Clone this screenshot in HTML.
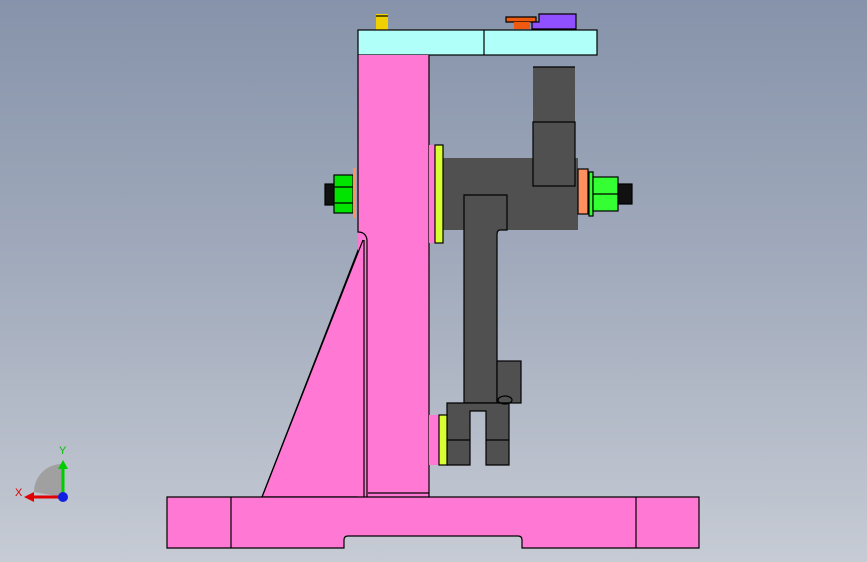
<!DOCTYPE html>
<html><head><style>
html,body{margin:0;padding:0;width:867px;height:562px;overflow:hidden}
body{background:linear-gradient(#8693aa,#a3acbd 50%,#c6cbd4)}
svg{position:absolute;left:0;top:0}
</style></head><body>
<svg width="867" height="562" viewBox="0 0 867 562" stroke="#000" stroke-width="1.2">
<rect x="376" y="14" width="12" height="16" fill="#f0d000" stroke="none"/>
<line x1="376" y1="16" x2="388" y2="16"/>
<path d="M506 17 H536 V22 H506 Z" fill="#f05a10"/>
<rect x="514" y="22" width="16" height="7" fill="#f05a10" stroke="none"/>
<path d="M539 14 H576 V29 H532 V22 H539 Z" fill="#9050ff"/>
<rect x="358" y="30" width="239" height="25" fill="#b0fff8"/>
<line x1="484" y1="30" x2="484" y2="55"/>
<path d="M262 497 L362 240 L368 238 L368 497 Z" fill="#ff78d4"/>
<rect x="358" y="55" width="71" height="442" fill="#ff78d4" stroke="none"/>
<path d="M358 55 V232 Q366 232 367 240 V497 M429 55 V497 M364 240 V497 M368 493 H429 M262 497 L363 240" fill="none"/>
<rect x="429" y="145" width="6" height="98" fill="#ff78d4" stroke="none"/>
<rect x="429" y="415" width="10" height="50" fill="#ff78d4" stroke="none"/>
<path d="M167 497 H699 V548 H522 V540 Q522 536 518 536 H348 Q344 536 344 540 V548 H167 Z" fill="#ff78d4"/>
<line x1="231" y1="497" x2="231" y2="548"/><line x1="636" y1="497" x2="636" y2="548"/>
<g fill="#505050">
<rect x="533" y="67" width="42" height="56" stroke="none"/>
<line x1="533" y1="67" x2="575" y2="67"/>
<rect x="443" y="158" width="135" height="72" stroke="none"/>
<rect x="533" y="122" width="42" height="64"/>
<path d="M464 195 H507 V230 H500 Q497 230 497 235 V403 H464 Z" />
<rect x="497" y="361" width="24" height="42"/>
<path d="M447 403 H509 V465 H486 V411 H470 V465 H447 Z"/>
<line x1="447" y1="440" x2="470" y2="440"/><line x1="486" y1="440" x2="509" y2="440"/>
<ellipse cx="505" cy="400" rx="7" ry="4" fill="none"/>
</g>
<rect x="435" y="145" width="8" height="98" fill="#d8ff30"/>
<rect x="439" y="415" width="8" height="50" fill="#d8ff30"/>
<rect x="325" y="184" width="9" height="21" fill="#111"/>
<rect x="334" y="175" width="19" height="38" fill="#00e400"/>
<line x1="334" y1="187" x2="353" y2="187"/><line x1="334" y1="203" x2="353" y2="203"/>
<rect x="353" y="168" width="3" height="50" fill="#ff9060" stroke="none"/>
<rect x="578" y="169" width="10" height="45" fill="#ff9060"/>
<rect x="589" y="172" width="4" height="44" fill="#33ff33"/>
<rect x="593" y="177" width="25" height="34" fill="#33ff33"/>
<line x1="593" y1="194" x2="618" y2="194"/>
<rect x="618" y="184" width="14" height="20" fill="#111"/>
<path d="M34 492 A28 28 0 0 1 62 464 V497 Z" fill="#a0a0a0" stroke="none"/>
<line x1="63" y1="497" x2="63" y2="468" stroke="#00cc00" stroke-width="3"/>
<path d="M58 469 L63 460 L68 469 Z" fill="#00cc00" stroke="none"/>
<line x1="63" y1="497" x2="32" y2="497" stroke="#e00000" stroke-width="3"/>
<path d="M34 492 L24 497 L34 502 Z" fill="#e00000" stroke="none"/>
<circle cx="63" cy="497" r="5" fill="#1020e0" stroke="none"/>
<text x="59" y="454" font-family="Liberation Sans,sans-serif" font-size="11" fill="#00c000" stroke="none">Y</text>
<text x="15" y="496" font-family="Liberation Sans,sans-serif" font-size="11" fill="#e00000" stroke="none">X</text>
</svg>
</body></html>
